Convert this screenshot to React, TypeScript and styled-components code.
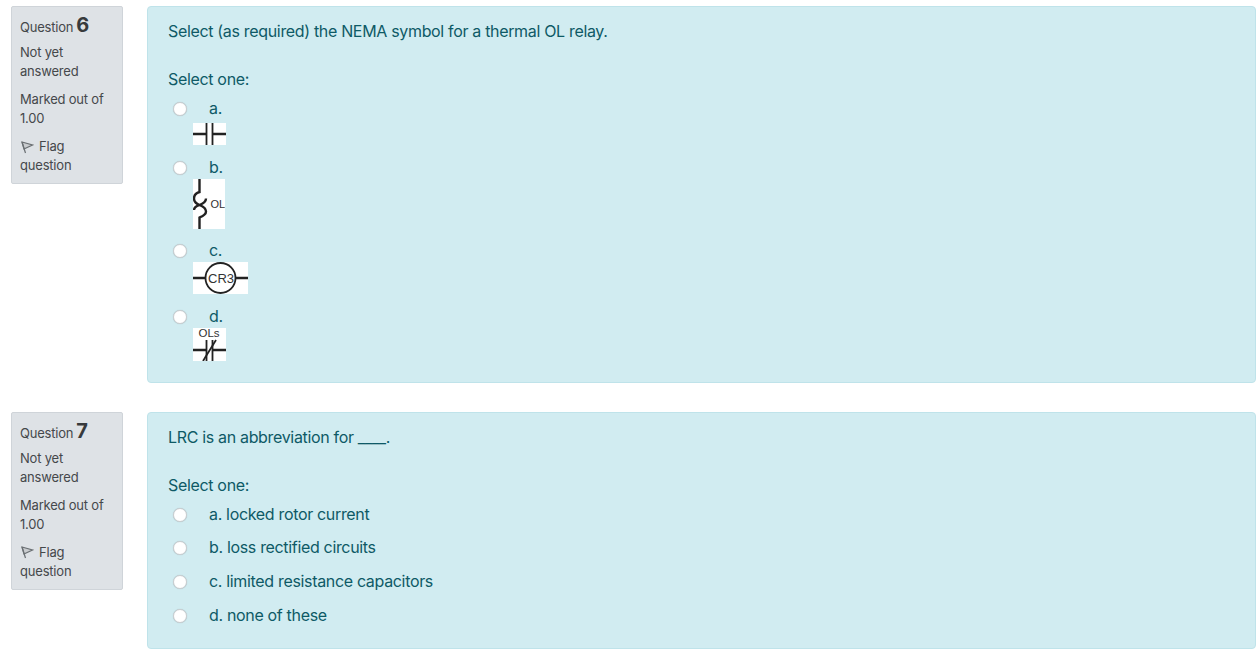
import styled, { createGlobalStyle } from 'styled-components';

const GlobalStyle = createGlobalStyle`
  html, body {
    margin: 0;
    background: #fff;
  }
  body {
    font-family: Inter, "Liberation Sans", sans-serif;
    font-size: 16px;
    line-height: 24px;
  }
`;

const Page = styled.div`
  padding: 6px 1px 0 11px;
`;

const QuestionRow = styled.div`
  display: flex;
  align-items: flex-start;
  gap: 24px;
  margin-bottom: 28.6px;
`;

const Info = styled.div`
  flex: 0 0 112px;
  box-sizing: border-box;
  height: 178px;
  padding: 7px 8px 0 8px;
  background: #dee2e6;
  border: 1px solid #cfd4d9;
  border-radius: 2px;
  color: #45484b;
  font-size: 13px;
  line-height: 19px;
  letter-spacing: -0.2px;
`;

const QuestionNo = styled.div`
  height: 29px;
  display: flex;
  align-items: baseline;
  gap: 3px;
  padding-top: 2px;
  box-sizing: border-box;
`;

const QuestionDigit = styled.span`
  font-size: 20px;
  font-weight: 700;
  color: #373a3c;
`;

const InfoBlock = styled.div`
  margin-bottom: 9px;
`;

const FlagRow = styled.div`
  display: flex;
  align-items: center;
  gap: 5px;
`;

const Formulation = styled.div`
  flex: 1;
  box-sizing: border-box;
  padding: 12px 20px;
  background: #d1ecf1;
  border: 1px solid #bfe3ea;
  border-radius: 4px;
  color: #0e5a66;
  letter-spacing: -0.33px;
`;

const Prompt = styled.p`
  margin: 0 0 24px;
`;

const SelectOne = styled.div`
  margin-bottom: 4.8px;
`;

const Option = styled.div`
  display: flex;
  padding-bottom: 9.6px;
`;

const Radio = styled.span`
  flex: 0 0 auto;
  box-sizing: border-box;
  width: 14px;
  height: 14px;
  margin: 6px 22px 0 5px;
  background: #fff;
  border: 1px solid #c9cdd0;
  border-radius: 50%;
  box-shadow: 0 0 1px rgba(0, 0, 0, 0.2);
`;

const OptionBody = styled.div`
  display: flex;
  flex-direction: column;
  align-items: flex-start;
`;

const Symbol = styled.svg<{ $top?: number }>`
  display: block;
  margin: ${(p) => p.$top ?? 0}px 0 0 -16px;
  background: #fff;
  letter-spacing: 0;
`;

const SymbolText = styled.text`
  font-family: "Liberation Sans", Arial, sans-serif;
  fill: #333;
`;

const FlagIcon = () => (
  <svg width="14" height="14" viewBox="0 0 14 14" fill="#c9cccf" stroke="#6a6f73" strokeWidth="1.2">
    <path d="M2 2 L12.5 5 L4 9 Z" />
    <path d="M2 2 L5.5 13" fill="none" />
  </svg>
);

const Contacts = () => (
  <Symbol $top={3.2} width="33" height="22" viewBox="0 0 33 22">
    <g stroke="#222" fill="none">
      <path d="M0 11H13.5M19.5 11H33" strokeWidth="2.4" />
      <path d="M13.5 0V22M19.5 0V22" strokeWidth="1.8" />
    </g>
  </Symbol>
);

const ThermalOl = () => (
  <Symbol width="32" height="50" viewBox="0 0 32 50">
    <g stroke="#222" strokeWidth="2.4" fill="none">
      <path d="M6.5 0V13C3 14 1 16 1 19.5C1 23 4 25 6.5 26C9 27 13 29 13 32.5C13 36 9 37.5 6.5 38.5V50" />
      <path d="M13 19.5C13 23 9 25 6.5 26C4 27 1 28 1 31" />
    </g>
    <SymbolText x="17.5" y="29" fontSize="11">OL</SymbolText>
  </Symbol>
);

const Coil = () => (
  <Symbol width="55" height="32" viewBox="0 0 55 32">
    <g stroke="#222" fill="none">
      <path d="M0 16H12M43 16H55" strokeWidth="2.4" />
      <circle cx="27.5" cy="16" r="15" strokeWidth="1.8" />
    </g>
    <SymbolText x="15" y="20.5" fontSize="13">CR3</SymbolText>
  </Symbol>
);

const NcContacts = () => (
  <Symbol width="33" height="33" viewBox="0 0 33 33">
    <SymbolText x="5.5" y="9" fontSize="11.5">OLs</SymbolText>
    <g stroke="#222" fill="none">
      <path d="M0 22H13.5M19.5 22H33" strokeWidth="2.4" />
      <path d="M13.5 12V33M19.5 12V33" strokeWidth="1.8" />
      <path d="M10 33L23 12" strokeWidth="1.8" />
    </g>
  </Symbol>
);

const InfoCard = ({ no }: { no: number }) => (
  <Info>
    <QuestionNo>
      Question <QuestionDigit>{no}</QuestionDigit>
    </QuestionNo>
    <InfoBlock>
      Not yet
      <br />
      answered
    </InfoBlock>
    <InfoBlock>
      Marked out of
      <br />
      1.00
    </InfoBlock>
    <FlagRow>
      <FlagIcon /> Flag
    </FlagRow>
    question
  </Info>
);

const textOptions = [
  'a. locked rotor current',
  'b. loss rectified circuits',
  'c. limited resistance capacitors',
  'd. none of these',
];

const imageOptions = [
  { label: 'a.', symbol: <Contacts /> },
  { label: 'b.', symbol: <ThermalOl /> },
  { label: 'c.', symbol: <Coil /> },
  { label: 'd.', symbol: <NcContacts /> },
];

export default function App() {
  return (
    <Page>
      <GlobalStyle />
      <QuestionRow>
        <InfoCard no={6} />
        <Formulation>
          <Prompt>Select (as required) the NEMA symbol for a thermal OL relay.</Prompt>
          <SelectOne>Select one:</SelectOne>
          {imageOptions.map((o) => (
            <Option key={o.label}>
              <Radio />
              <OptionBody>
                {o.label}
                {o.symbol}
              </OptionBody>
            </Option>
          ))}
        </Formulation>
      </QuestionRow>
      <QuestionRow>
        <InfoCard no={7} />
        <Formulation>
          <Prompt>LRC is an abbreviation for ____.</Prompt>
          <SelectOne>Select one:</SelectOne>
          {textOptions.map((t) => (
            <Option key={t}>
              <Radio />
              <OptionBody>{t}</OptionBody>
            </Option>
          ))}
        </Formulation>
      </QuestionRow>
    </Page>
  );
}
